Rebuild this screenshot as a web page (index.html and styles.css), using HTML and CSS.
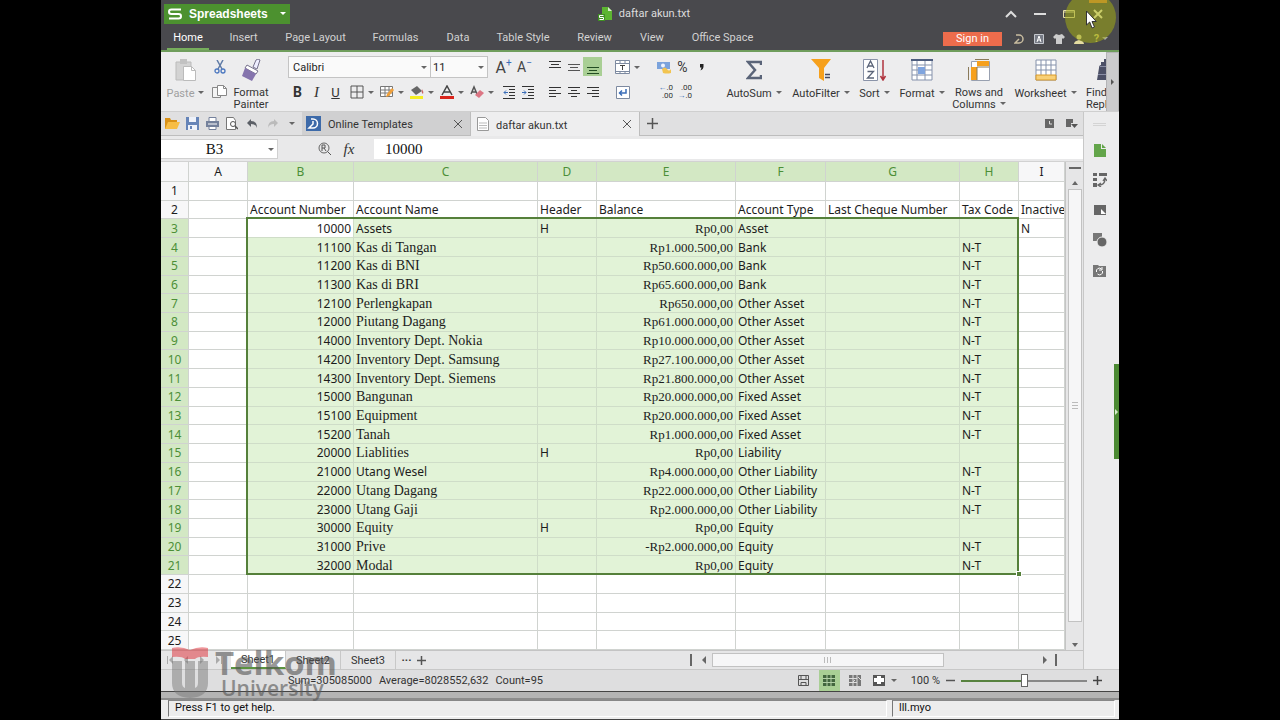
FILE: index.html
```
<!DOCTYPE html>
<html lang="en">

<head>
    <meta charset="UTF-8">
    <meta name="viewport" content="width=device-width, initial-scale=1.0">
    <title>daftar akun.txt - Spreadsheets</title>
    <link rel="stylesheet" href="styles.css">
</head>

<body>
    <div class="app">
        <header class="top">
            <div class="title_bar">
                <button class="brand">
                    <svg width="14" height="12" viewBox="0 0 14 12"><path d="M13 1.5H3.5Q1 1.5 1 3.7T3.5 6h7Q13 6 13 8.2t-2.5 2.3H1" fill="none" stroke="#fff" stroke-width="2" /></svg>
                    <span>Spreadsheets</span>
                    <i class="caret"></i>
                </button>
                <div class="doc_title">
                    <svg width="14" height="14" viewBox="0 0 14 14"><path d="M4 0h6l4 4v9H4z" fill="#5cb531" /><path d="M10 0v4h4z" fill="#d6f0c8" /><path d="M0 7h7v7H0z" fill="#3f8f22" /><path d="M5.500 8.500h-4v2h4v2h-4" fill="none" stroke="#fff" /></svg>
                    <span>daftar akun.txt</span>
                </div>
                <div class="window_buttons">
                    <button aria-label="Collapse"><svg width="12" height="8" viewBox="0 0 12 8"><path d="M1 7l5-5 5 5" fill="none" stroke="#ddd" stroke-width="2" /></svg></button>
                    <button aria-label="Minimize"><svg width="12" height="8" viewBox="0 0 12 8"><path d="M0 4h12" stroke="#ddd" stroke-width="2" /></svg></button>
                    <button aria-label="Maximize"><svg width="12" height="8" viewBox="0 0 12 8"><path d="M.5.5h11v7H.5zM1 2h10" fill="none" stroke="#e8e0a8" /></svg></button>
                    <button aria-label="Close" class="close"><svg width="10" height="10" viewBox="0 0 10 10"><path d="M1 1l8 8M9 1L1 9" stroke="#fffbd0" stroke-width="2" /></svg></button>
                </div>
            </div>
            <div class="menu_bar">
                <nav class="menu">
                    <a href="#" class="active">Home</a>
                    <a href="#">Insert</a>
                    <a href="#">Page Layout</a>
                    <a href="#">Formulas</a>
                    <a href="#">Data</a>
                    <a href="#">Table Style</a>
                    <a href="#">Review</a>
                    <a href="#">View</a>
                    <a href="#">Office Space</a>
                </nav>
                <button class="sign_in">Sign in</button>
                <div class="menu_icons">
                    <button aria-label="Docer"><svg width="10" height="10" viewBox="0 0 10 10"><path d="M2 1h3a4 4 0 010 8H1l4-4" fill="none" stroke="#c9bda0" stroke-width="1.500" /></svg></button>
                    <button aria-label="Language"><svg width="10" height="10" viewBox="0 0 10 10"><path d="M.5.5h9v9h-9z" fill="#777b85" stroke="#c5c8ce" /><path d="M3 8l2-6 2 6M4 6h3" fill="none" stroke="#fff" /></svg></button>
                    <button aria-label="Skin"><svg width="12" height="10" viewBox="0 0 12 10"><path d="M3 0l3 1 3-1 3 3-2 2-1-1v6H3V4L2 5 0 3z" fill="#ccc" /></svg></button>
                    <button aria-label="Account"><svg width="10" height="10" viewBox="0 0 10 10"><circle cx="5" cy="3" r="2.500" fill="#e4dca0" /><path d="M0 10q0-3 5-4 5 1 5 4z" fill="#e4dca0" /></svg></button>
                    <button aria-label="Help" class="help">?<i class="caret"></i></button>
                </div>
            </div>
            <span class="close_glow"></span>
            <span class="click_halo"></span>
            <svg class="pointer" width="11" height="19" viewBox="0 0 11 19"><path d="M.5 1v14l3.200-3 2.300 6 2.500-1-2.500-5.500h4.300z" fill="#fff" stroke="#333" /></svg>
        </header>

        <div class="ribbon">
            <button class="big paste">
                <svg width="22" height="22" viewBox="0 0 22 22"><path d="M1 3h15v18H1z" fill="#d3d3d3" stroke="#bbb" /><path d="M5 0h7v5H5z" fill="#c2c2c2" /><path d="M8.500 7.500h8l4 4v10h-12z" fill="#fff" stroke="#bbb" /><path d="M16.500 7.500v4h4" fill="none" stroke="#bbb" /></svg>
                <span class="label">Paste<i class="caret"></i></span>
            </button>
            <div class="tool_block">
                <div class="tools"><button class="tool" aria-label="Cut"><svg width="12" height="14" viewBox="0 0 12 14"><path d="M3 0l5 9M9 0L4 9" stroke="#5f7ba6" stroke-width="1.500" /><circle cx="3" cy="11" r="2" fill="none" stroke="#4c78c0" stroke-width="1.300" /><circle cx="9" cy="11" r="2" fill="none" stroke="#4c78c0" stroke-width="1.300" /></svg></button></div>
                <div class="tools"><button class="tool" aria-label="Copy"><svg width="15" height="14" viewBox="0 0 15 14"><path d="M.5 2.500h8v10h-8z" fill="#f4f4f4" stroke="#888" /><path d="M5.500.5h6l3 3v7h-9z" fill="#fff" stroke="#888" /><path d="M11.500.5v3h3" fill="none" stroke="#888" /></svg></button></div>
            </div>
            <button class="big painter">
                <svg width="20" height="22" viewBox="0 0 20 22"><path d="M12 8l3-7q2-2 4 0l-3 9z" fill="#eef" stroke="#76718c" /><path d="M6 6l11 6-2 3L4 9z" fill="#fff" stroke="#76718c" /><path d="M4 9l11 6-4 7L1 17z" fill="#8574ad" /></svg>
                <span class="label">Format<br>Painter</span>
            </button>

            <div class="tool_block fonts">
                <div class="tools">
                    <span class="pick font_pick"><select aria-label="Font"><option>Calibri</option></select><i class="caret"></i></span>
                    <span class="pick size_pick"><select aria-label="Font size"><option>11</option></select><i class="caret"></i></span>
                    <button class="tool grow" aria-label="Increase font size">A<sup>+</sup></button>
                    <button class="tool shrink" aria-label="Decrease font size">A<sup>−</sup></button>
                </div>
                <div class="tools">
                    <button class="tool bold">B</button>
                    <button class="tool italic">I</button>
                    <button class="tool underline">U</button>
                    <button class="tool drop first_drop" aria-label="Borders"><svg width="14" height="14" viewBox="0 0 14 14"><path d="M1 1h12v12H1zM7 1v12M1 7h12" fill="none" stroke="#555" /></svg><i class="caret"></i></button>
                    <button class="tool drop" aria-label="Cell style"><svg width="14" height="14" viewBox="0 0 14 14"><path d="M.5 1.500h12v10H.5zM1 5h12M1 8h12M5 1v10M9 1v10" fill="#fff" stroke="#777" /><path d="M6 12l1-3 5-6 2 2-5 6z" fill="#f0a03a" /></svg><i class="caret"></i></button>
                    <button class="tool drop" aria-label="Fill color"><svg width="14" height="14" viewBox="0 0 14 14"><path d="M1 5l6-4 5 5-6 4z" fill="#666" /><path d="M12 4q2 3 1 5-2-1-1-5" fill="#c66" /><path d="M0 11h13v3H0z" fill="#f4ee22" /></svg><i class="caret"></i></button>
                    <button class="tool drop" aria-label="Font color"><svg width="14" height="14" viewBox="0 0 14 14"><path d="M2 10L7 1l5 9M4 7h6" fill="none" stroke="#444" stroke-width="1.500" /><path d="M0 11h14v3H0z" fill="#d9251c" /></svg><i class="caret"></i></button>
                    <button class="tool drop" aria-label="Clear format"><svg width="14" height="14" viewBox="0 0 14 14"><path d="M1 9l3-7 3 7M2 7h4" fill="none" stroke="#555" stroke-width="1.500" /><path d="M5 10l5-5 4 3-5 5z" fill="#dc7684" /></svg><i class="caret"></i></button>
                    <button class="tool" aria-label="Decrease indent"><svg width="13" height="13" viewBox="0 0 13 13"><path d="M0 .5h12M6 3.500h6M6 6.500h6M6 9.500h6M0 12.500h12" stroke="#333" /><path d="M5 6.500H1M3 4.500l-2 2 2 2" fill="none" stroke="#3a6db8" /></svg></button>
                    <button class="tool" aria-label="Increase indent"><svg width="13" height="13" viewBox="0 0 13 13"><path d="M0 .5h12M6 3.500h6M6 6.500h6M6 9.500h6M0 12.500h12" stroke="#333" /><path d="M0 6.500h4M2 4.500l2 2-2 2" fill="none" stroke="#3a6db8" /></svg></button>
                </div>
            </div>
            <div class="tool_block align">
                <div class="tools">
                    <button class="tool" aria-label="Top align"><svg width="12" height="14" viewBox="0 0 12 14"><path d="M0 1.500h12M2 4.500h8M0 7.500h12" stroke="#333" /></svg></button>
                    <button class="tool" aria-label="Middle align"><svg width="12" height="14" viewBox="0 0 12 14"><path d="M0 4.500h12M2 7.500h8M0 10.500h12" stroke="#555" /></svg></button>
                    <button class="tool on" aria-label="Bottom align"><svg width="12" height="14" viewBox="0 0 12 14"><path d="M0 7.500h12M2 10.500h8M0 13.500h12" stroke="#234d23" /></svg></button>
                </div>
                <div class="tools">
                    <button class="tool" aria-label="Align left"><svg width="12" height="12" viewBox="0 0 12 12"><path d="M0 1.500h12M0 4.500h7M0 7.500h12M0 10.500h7" stroke="#333" /></svg></button>
                    <button class="tool" aria-label="Align center"><svg width="12" height="12" viewBox="0 0 12 12"><path d="M0 1.500h12M3 4.500h6M0 7.500h12M3 10.500h6" stroke="#333" /></svg></button>
                    <button class="tool" aria-label="Align right"><svg width="12" height="12" viewBox="0 0 12 12"><path d="M0 1.500h12M5 4.500h7M0 7.500h12M5 10.500h7" stroke="#333" /></svg></button>
                </div>
            </div>
            <div class="tool_block merge">
                <div class="tools"><button class="tool drop" aria-label="Merge cells"><svg width="15" height="14" viewBox="0 0 15 14"><path d="M.5.5h14v13H.5zM0 3.500h15M0 11.500h15M5 0v3M10 0v3M5 11v3M10 11v3" fill="#fff" stroke="#7d8aa0" /><path d="M5 5.500h5M7.500 5v5" stroke="#444" /></svg><i class="caret"></i></button></div>
                <div class="tools"><button class="tool" aria-label="Wrap text"><svg width="14" height="13" viewBox="0 0 14 13"><path d="M.5.5h13v12H.5z" fill="#fff" stroke="#7d8aa0" /><path d="M10 3v4H4M6 4.500L3.500 7 6 9.500" fill="none" stroke="#3a6db8" stroke-width="1.500" /></svg></button></div>
            </div>
            <div class="tool_block number">
                <div class="tools">
                    <button class="tool" aria-label="Currency"><svg width="14" height="13" viewBox="0 0 14 13"><path d="M0 1h13v7H0z" fill="#7ba3dc" /><circle cx="6" cy="4.500" r="2" fill="#eef4ff" /><path d="M5 8q3-3 5 0t4 0v4q-4 1-8 0z" fill="#f2c450" /></svg></button>
                    <button class="tool percent">%</button>
                    <button class="tool" aria-label="Comma style"><svg width="5" height="8" viewBox="0 0 5 8"><path d="M1 1h3.500v3Q4.500 6 1.500 7.500L2.500 4.500H1z" fill="#222" /></svg></button>
                </div>
                <div class="tools">
                    <button class="tool decimals"><b>←</b>.0<br>.00</button>
                    <button class="tool decimals">.00<br><b>→</b>.0</button>
                </div>
            </div>

            <button class="big autosum">
                <svg width="16" height="20" viewBox="0 0 16 20"><path d="M15 5V2H2l7 8-7 8h13v-3" fill="none" stroke="#5a6478" stroke-width="2.500" /></svg>
                <span class="label">AutoSum<i class="caret"></i></span>
            </button>
            <button class="big autofilter">
                <svg width="22" height="22" viewBox="0 0 22 22"><path d="M1 0h20l-7 9v13l-5-3V9z" fill="#f6a01c" /><path d="M15 15.500h5M15 18.500h5" stroke="#444a60" stroke-width="1.500" /></svg>
                <span class="label">AutoFilter<i class="caret"></i></span>
            </button>
            <button class="big sort">
                <svg width="24" height="22" viewBox="0 0 24 22"><path d="M.5.5h14v21H.5z" fill="#fff" stroke="#8a93a8" /><path d="M4 9l3.500-7L11 9M5 7h5M4.500 12.500h6l-6 6.500h6.500" fill="none" stroke="#5b6478" stroke-width="1.300" /><path d="M20 1v20M17.500 17l2.500 4 2.500-4" fill="none" stroke="#b0353f" stroke-width="1.500" /></svg>
                <span class="label">Sort<i class="caret"></i></span>
            </button>
            <button class="big format">
                <svg width="22" height="22" viewBox="0 0 22 22"><path d="M1 1h20v20H1zM1 6h20M1 11h20M1 16h20M6 1v20M14 1v20" fill="#fff" stroke="#8592ab" /><path d="M0 0h22v2H0z" fill="#4d5d7e" /><path d="M7 8h7v7H7z" fill="#7fa4de" /></svg>
                <span class="label">Format<i class="caret"></i></span>
            </button>
            <button class="big rows_cols">
                <svg width="22" height="22" viewBox="0 0 22 22"><path d="M3.500 2.500h18v19h-18z" fill="#fff" stroke="#98a0b0" /><path d="M9 2h12v5H9zM3 8h6v13H3z" fill="#f6a01c" /><path d="M.5 8v13M7 .5h14M9 8h12M9 8v13" stroke="#8a7a5a" /></svg>
                <span class="label">Rows and<br>Columns<i class="caret"></i></span>
            </button>
            <button class="big worksheet">
                <svg width="22" height="22" viewBox="0 0 22 22"><path d="M1 1h20v20H1zM1 6h20M1 11h20M6 1v15M11 1v15M16 1v15" fill="#fff" stroke="#8592ab" /><path d="M1 16h20v5H1z" fill="#f8d077" stroke="#d99a2a" /></svg>
                <span class="label">Worksheet<i class="caret"></i></span>
            </button>
            <button class="big find">
                <svg width="22" height="22" viewBox="0 0 22 22"><path d="M3 9q0-3 2-3V3h3V0h3v3h3v3q2 0 2 3v12H1z" fill="#4b4f66" /><path d="M2 15.500h14M4 7.500h11" stroke="#8a8ea6" /></svg>
                <span class="label">Find and<br>Replace</span>
            </button>
            <button class="ribbon_more" aria-label="More tools"></button>
        </div>

        <div class="workspace">
            <main class="main">
                <div class="doc_tabs">
                    <div class="quick">
                        <button aria-label="Open"><svg width="15" height="13" viewBox="0 0 15 13"><path d="M0 1h5l1 2h6v9H0z" fill="#d99117" /><path d="M3 5h12l-3 7H0z" fill="#f7bd45" /></svg></button>
                        <button aria-label="Save"><svg width="13" height="13" viewBox="0 0 13 13"><path d="M0 0h13v13H0z" fill="#6584b8" /><path d="M3 0h7v5H3zM2 8h9v5H2z" fill="#eef2fa" /><path d="M4 9h2v3H4z" fill="#6584b8" /></svg></button>
                        <button aria-label="Print"><svg width="13" height="13" viewBox="0 0 13 13"><path d="M3 .5h7v4H3zM3 8.500h7v4H3z" fill="#fff" stroke="#74819c" /><path d="M0 4h13v6H0z" fill="#74819c" /><path d="M2 7h9" stroke="#fff" /></svg></button>
                        <button aria-label="Preview"><svg width="12" height="13" viewBox="0 0 12 13"><path d="M.5.5h7l2 3v9h-9z" fill="#fff" stroke="#777" /><circle cx="7" cy="7" r="2.500" fill="#fff" stroke="#555" /><path d="M9 9l3 3" stroke="#555" stroke-width="1.500" /></svg></button>
                        <button aria-label="Undo"><svg width="11" height="9" viewBox="0 0 11 9"><path d="M4 0v2q6 0 6 7Q9 5 4 5v3L0 4z" fill="#5b5f66" /></svg></button>
                        <button aria-label="Redo"><svg width="11" height="9" viewBox="0 0 11 9"><path d="M7 0v2Q1 2 1 9q1-4 6-4v3l4-4z" fill="#bbb" /></svg></button>
                        <button aria-label="Customize"><i class="caret"></i></button>
                    </div>
                    <div class="doc_tab">
                        <svg width="15" height="15" viewBox="0 0 15 15"><path d="M0 0h15v15H0z" fill="#3d6aa9" /><path d="M5 3h2a4.500 4.500 0 010 9H3l4-4V5" fill="none" stroke="#fff" stroke-width="1.500" /></svg>
                        <span>Online Templates</span>
                        <button class="x" aria-label="Close tab"><svg width="8" height="8" viewBox="0 0 8 8"><path d="M0 0l8 8M8 0L0 8" stroke="#555" /></svg></button>
                    </div>
                    <div class="doc_tab current">
                        <svg width="12" height="14" viewBox="0 0 12 14"><path d="M.5.5h8l3 3v10H.5z" fill="#fff" stroke="#999" /><path d="M2 6h8M2 8.500h8M2 11h8" stroke="#bbb" /></svg>
                        <span>daftar akun.txt</span>
                        <button class="x" aria-label="Close tab"><svg width="8" height="8" viewBox="0 0 8 8"><path d="M0 0l8 8M8 0L0 8" stroke="#555" /></svg></button>
                    </div>
                    <button class="new_tab" aria-label="New tab"><svg width="11" height="11" viewBox="0 0 11 11"><path d="M0 5.500h11M5.500 0v11" stroke="#555" stroke-width="1.500" /></svg></button>
                    <div class="tab_tools">
                        <button aria-label="History"><svg width="9" height="9" viewBox="0 0 9 9"><path d="M0 0h9v9H0z" fill="#666" /><path d="M4.500 2v3H7" fill="none" stroke="#ddd" /></svg></button>
                        <button aria-label="Tab list"><svg width="12" height="10" viewBox="0 0 12 10"><path d="M0 0h7v4H5v4H0z" fill="#666" /><path d="M5 5h7L8.500 9z" fill="#555" /></svg></button>
                    </div>
                </div>
                <div class="formula_bar">
                    <div class="name_box"><input type="text" aria-label="Cell name" value="B3"><i class="caret"></i></div>
                    <button aria-label="Look up"><svg width="14" height="14" viewBox="0 0 14 14"><circle cx="6" cy="6" r="5" fill="none" stroke="#666" /><path d="M4 9V3h3v3H4M6 6l2 3M9.500 9.500L13 13" fill="none" stroke="#555" /></svg></button>
                    <button class="fx">fx</button>
                    <input class="formula" type="text" aria-label="Formula" value="10000">
                </div>
                <div class="sheet_area">
                    <table class="sheet">
                        <thead>
                            <tr id="columnHeads"></tr>
                        </thead>
                        <tbody id="sheetBody"></tbody>
                    </table>
                    <div class="scroll_y">
                        <i class="split"></i>
                        <i class="up"></i>
                        <div class="thumb_y"><span></span></div>
                        <i class="down"></i>
                    </div>
                </div>
                <div class="sheet_bar">
                    <div class="sheet_nav">
                        <button aria-label="First sheet"><svg width="7" height="8" viewBox="0 0 7 8"><path d="M.5 0v8" stroke="#aaa" /><path d="M6 0v8L2 4z" fill="#aaa" /></svg></button>
                        <button aria-label="Previous sheet"><svg width="7" height="8" viewBox="0 0 7 8"><path d="M5 0v8L1 4z" fill="#aaa" /></svg></button>
                        <button aria-label="Next sheet"><svg width="7" height="8" viewBox="0 0 7 8"><path d="M1 0v8l4-4z" fill="#aaa" /></svg></button>
                        <button aria-label="Last sheet"><svg width="7" height="8" viewBox="0 0 7 8"><path d="M6.500 0v8" stroke="#aaa" /><path d="M1 0v8l4-4z" fill="#aaa" /></svg></button>
                    </div>
                    <button class="sheet_tab current">Sheet1</button>
                    <button class="sheet_tab">Sheet2</button>
                    <button class="sheet_tab">Sheet3</button>
                    <button class="dots" aria-label="More sheets">···</button>
                    <button aria-label="Add sheet"><svg width="9" height="9" viewBox="0 0 9 9"><path d="M0 4.500h9M4.500 0v9" stroke="#555" stroke-width="1.500" /></svg></button>
                    <div class="scroll_x">
                        <i class="bar"></i>
                        <i class="left"></i>
                        <div class="track_x"><div class="thumb_x"><span></span></div></div>
                        <i class="right"></i>
                        <i class="bar"></i>
                    </div>
                </div>
            </main>
            <aside class="side">
                <i class="grip"></i>
                <button aria-label="New document"><svg width="12" height="13" viewBox="0 0 12 13"><path d="M0 0h7v5h5v8H0zM8 0l4 4H8z" fill="#63a54a" /></svg></button>
                <button aria-label="Layout"><svg width="14" height="14" viewBox="0 0 14 14"><path d="M0 0h4v3H0zM6 0h8v3H6zM0 5h4v3H0zM0 10h4v4H0z" fill="#666" /><path d="M6 12q6 0 6-6M10 8l2-3 2 3M8 10l-3 2 3 2" fill="none" stroke="#666" stroke-width="1.300" /></svg></button>
                <button aria-label="Selection"><svg width="12" height="12" viewBox="0 0 12 12"><path d="M0 1h12v10H0z" fill="#666" /><path d="M7 5l5 5H7z" fill="#fff" /></svg></button>
                <button aria-label="Shapes"><svg width="14" height="14" viewBox="0 0 14 14"><path d="M0 0h9v8H0z" fill="#777" /><circle cx="9" cy="9" r="5" fill="#666" stroke="#ececec" /></svg></button>
                <button aria-label="Backup"><svg width="13" height="13" viewBox="0 0 13 13"><path d="M0 1h5l1 1h7v11H0z" fill="#777" /><path d="M3.500 8a3 3 0 015-3M9.500 7a3 3 0 01-5 3M9 3v3H6" fill="none" stroke="#fff" /></svg></button>
                <button class="side_handle" aria-label="Show panel"></button>
            </aside>
        </div>

        <footer class="status">
            <div class="sums"><span>Sum=305085000</span><span>Average=8028552,632</span><span>Count=95</span></div>
            <div class="views">
                <button aria-label="Save state"><svg width="11" height="11" viewBox="0 0 11 11"><path d="M.5.5h10v10H.5zM0 4.500h11M3 1v3M8 1v3M3 7.500h5v3H3z" fill="none" stroke="#555" /></svg></button>
                <button class="on" aria-label="Normal view"><svg width="12" height="11" viewBox="0 0 12 11"><path d="M0 0h12v11H0z" fill="#42663e" /><path d="M0 3.500h12M0 7.500h12M4 0v11M8 0v11" stroke="#b4d1a8" /></svg></button>
                <button aria-label="Page break view"><svg width="12" height="11" viewBox="0 0 12 11"><path d="M0 0h12v11H0z" fill="#777" /><path d="M0 3.500h8M0 7.500h8M4 0v11M8 0v11M9 2l3 3M3 8l3-3" stroke="#ddd" /></svg></button>
                <button class="wide" aria-label="Reading view"><svg width="12" height="11" viewBox="0 0 12 11"><path d="M0 0h12v11H0z" fill="#555" /><path d="M1 3h10v4H1zM4 1h4v8H4z" fill="#fff" /></svg><i class="caret"></i></button>
            </div>
            <div class="zoom">
                <span>100 %</span>
                <button aria-label="Zoom out"><svg width="9" height="9" viewBox="0 0 9 9"><path d="M0 4.500h9" stroke="#555" stroke-width="1.500" /></svg></button>
                <input type="range" aria-label="Zoom" min="0" max="200" value="100">
                <button aria-label="Zoom in"><svg width="9" height="9" viewBox="0 0 9 9"><path d="M0 4.500h9M4.500 0v9" stroke="#444" stroke-width="1.500" /></svg></button>
            </div>
        </footer>

        <div class="help_bar">
            <p>Press F1 to get help.</p>
            <p>lll.myo</p>
        </div>

        <div class="watermark">
            <svg width="38" height="52" viewBox="0 0 38 52"><path d="M1 2q9-2 18 2 9-4 18-2v9q-10-1-13 2H14Q11 10 1 11z" fill="#e0252f" /><path d="M1 15h10v22q0 4 3 5V15h10v27q3-1 3-5V15h10v22q0 14-18 15Q1 51 1 37z" fill="#777" /></svg>
            <div class="words"><b>Telkom</b><span>University</span></div>
        </div>
    </div>

    <script>
        let columns = ['A', 'B', 'C', 'D', 'E', 'F', 'G', 'H', 'I'];
        let total_rows = 25;
        let first_row = 3;
        let last_row = 21;

        // values for columns B to I, keyed by row order starting at row 2
        let records = [
            ['Account Number', 'Account Name', 'Header', 'Balance', 'Account Type', 'Last Cheque Number', 'Tax Code', 'Inactive'],
            ['10000', 'Assets', 'H', 'Rp0,00', 'Asset', '', '', 'N'],
            ['11100', 'Kas di Tangan', '', 'Rp1.000.500,00', 'Bank', '', 'N-T', ''],
            ['11200', 'Kas di BNI', '', 'Rp50.600.000,00', 'Bank', '', 'N-T', ''],
            ['11300', 'Kas di BRI', '', 'Rp65.600.000,00', 'Bank', '', 'N-T', ''],
            ['12100', 'Perlengkapan', '', 'Rp650.000,00', 'Other Asset', '', 'N-T', ''],
            ['12000', 'Piutang Dagang', '', 'Rp61.000.000,00', 'Other Asset', '', 'N-T', ''],
            ['14000', 'Inventory Dept. Nokia', '', 'Rp10.000.000,00', 'Other Asset', '', 'N-T', ''],
            ['14200', 'Inventory Dept. Samsung', '', 'Rp27.100.000,00', 'Other Asset', '', 'N-T', ''],
            ['14300', 'Inventory Dept. Siemens', '', 'Rp21.800.000,00', 'Other Asset', '', 'N-T', ''],
            ['15000', 'Bangunan', '', 'Rp20.000.000,00', 'Fixed Asset', '', 'N-T', ''],
            ['15100', 'Equipment', '', 'Rp20.000.000,00', 'Fixed Asset', '', 'N-T', ''],
            ['15200', 'Tanah', '', 'Rp1.000.000,00', 'Fixed Asset', '', 'N-T', ''],
            ['20000', 'Liablities', 'H', 'Rp0,00', 'Liability', '', '', ''],
            ['21000', 'Utang Wesel', '', 'Rp4.000.000,00', 'Other Liability', '', 'N-T', ''],
            ['22000', 'Utang Dagang', '', 'Rp22.000.000,00', 'Other Liability', '', 'N-T', ''],
            ['23000', 'Utang Gaji', '', 'Rp2.000.000,00', 'Other Liability', '', 'N-T', ''],
            ['30000', 'Equity', 'H', 'Rp0,00', 'Equity', '', '', ''],
            ['31000', 'Prive', '', '-Rp2.000.000,00', 'Equity', '', 'N-T', ''],
            ['32000', 'Modal', '', 'Rp0,00', 'Equity', '', 'N-T', '']
        ];
        // account names still in the default sheet font
        let plain_names = [2, 3, 16];

        function draw_heads() {
            let html = '<th class="corner"></th>';
            columns.forEach(function (name, c) {
                let picked = c >= 1 && c <= 7 ? ' picked' : '';
                html += '<th class="col_' + name + picked + '">' + name + '</th>';
            });
            document.getElementById("columnHeads").innerHTML = html;
        }

        function draw_rows() {
            let html = '';
            for (let r = 1; r <= total_rows; r++) {
                let in_rows = r >= first_row && r <= last_row;
                let record = records[r - 2] || [];
                html += '<tr><th class="' + (in_rows ? 'picked' : '') + '">' + r + '</th>';
                columns.forEach(function (name, c) {
                    let in_cols = c >= 1 && c <= 7;
                    let names = [];
                    if (in_rows && in_cols) names.push('selected');
                    if (r == first_row && c == 1) names.push('current_cell');
                    if (in_rows && (c == 0 || c == 7)) names.push('edge_side');
                    if (in_cols && (r == first_row - 1 || r == last_row)) names.push('edge_bottom');
                    if (r > 2 && (name == 'B' || name == 'E')) names.push('number_cell');
                    if (r > 2 && name == 'E') names.push('money');
                    if (r > 2 && name == 'C' && !plain_names.includes(r)) names.push('serif');
                    let value = c == 0 ? '' : (record[c - 1] || '');
                    if (r == last_row && c == 7) value += '<i class="fill_handle"></i>';
                    html += '<td class="' + names.join(' ') + '">' + value + '</td>';
                });
                html += '</tr>';
            }
            document.getElementById("sheetBody").innerHTML = html;
        }

        draw_heads();
        draw_rows();
    </script>
</body>

</html>
```

FILE: styles.css
```
* {
    box-sizing: border-box;
}

body {
    margin: 0;
    padding: 0 161px;
    background: #000;
    font-family: Roboto, "Noto Sans", sans-serif;
    font-size: 11px;
    color: #333;
}

button,
input,
select {
    margin: 0;
    padding: 0;
    border: none;
    background: none;
    font: inherit;
    color: inherit;
}

button {
    display: flex;
    align-items: center;
    justify-content: center;
    cursor: pointer;
}

svg {
    display: block;
    flex: none;
}

.caret {
    flex: none;
    border: 3px solid transparent;
    border-top-color: #666;
    border-bottom: none;
}

.app {
    position: relative;
    display: flex;
    flex-direction: column;
    min-height: 100vh;
    overflow: hidden;
    background: #e9e9ea;
}

/* title and menu */
.top {
    position: relative;
    background: #49494d;
    color: #ddd;
    border-bottom: 2px solid #6f9d5c;
}

.title_bar {
    display: grid;
    grid-template-columns: 1fr auto 1fr;
    align-items: center;
    height: 27px;
    padding: 0 7px 0 3px;
}

.brand {
    justify-self: start;
    gap: 7px;
    height: 20px;
    padding: 0 4px;
    background: #4c912f;
    font-family: "Liberation Sans", sans-serif;
    font-size: 12px;
    font-weight: bold;
    color: #fff;
}

.brand .caret {
    margin-left: 5px;
    border-top-color: #fff;
}

.doc_title {
    display: flex;
    align-items: center;
    gap: 7px;
    margin-left: 12px;
}

.window_buttons {
    justify-self: end;
    display: flex;
}

.window_buttons button {
    width: 29px;
    height: 24px;
}

.menu_bar {
    display: flex;
    align-items: center;
    height: 23px;
}

.menu {
    display: grid;
    grid-template-columns: 54px 57px 87px 73px 52px 78px 65px 50px 91px;
    flex: 1;
    height: 23px;
}

.menu a {
    justify-self: center;
    padding: 0 6px;
    line-height: 22px;
    color: #d2d2d2;
    text-decoration: none;
}

.menu .active {
    line-height: 21px;
    border-bottom: 2px solid #76ad5c;
    color: #fff;
}

.sign_in {
    width: 59px;
    height: 14px;
    background: #ed6c4c;
    color: #fff;
}

.menu_icons {
    display: flex;
    padding: 0 6px 0 7px;
}

.menu_icons button {
    width: 20px;
    height: 18px;
}

.menu_icons .help {
    width: 24px;
    gap: 3px;
    color: #d8cf72;
    font-weight: bold;
}

.help .caret {
    border-top-color: #aaa;
}

.close_glow {
    position: absolute;
    top: 0;
    right: 12px;
    width: 18px;
    height: 3px;
    background: #e0823a;
}

.click_halo {
    position: absolute;
    top: -8px;
    right: 3px;
    width: 51px;
    height: 51px;
    border-radius: 50%;
    background: rgba(160, 170, 20, 0.55);
}

.pointer {
    position: absolute;
    top: 10px;
    right: 22px;
}

/* ribbon */
.ribbon {
    position: relative;
    display: flex;
    align-items: flex-start;
    height: 60px;
    padding: 4px 0 0;
    overflow: hidden;
    background: #ededee;
    border-bottom: 1px solid #cfcfcf;
}

.big {
    flex: none;
    flex-direction: column;
    justify-content: flex-start;
    padding-top: 3px;
}

.big svg {
    height: 22px;
}

.label {
    margin-top: 7px;
    line-height: 12px;
    white-space: nowrap;
}

.label .caret {
    display: inline-block;
    margin-left: 4px;
    vertical-align: 3px;
}

.paste {
    width: 49px;
    color: #a0a0a0;
}

.painter {
    width: 44px;
    margin-right: 15px;
}

.painter .label,
.rows_cols .label,
.find .label {
    margin-top: 6px;
}

.tool_block {
    display: flex;
    flex-direction: column;
    flex: none;
    gap: 3px;
}

.tools {
    display: flex;
    height: 22px;
}

.tool {
    width: 19px;
    height: 22px;
    white-space: nowrap;
}

.drop {
    justify-content: flex-start;
    gap: 4px;
    width: 30px;
    padding-left: 2px;
}

.first_drop {
    margin-left: 3px;
}

.drop + .tool:not(.drop) {
    margin-left: 2px;
}

.tool.on {
    height: 19px;
    margin-top: 1px;
    background: #a9cf95;
}

.fonts {
    width: 250px;
}

.align {
    margin-left: 7px;
}

.merge {
    margin-left: 11px;
}

.number {
    width: 69px;
    margin-left: 11px;
}

.pick {
    display: flex;
    align-items: center;
    background: #fafafa;
    border: 1px solid #c4c4c4;
}

.pick select {
    flex: 1;
    min-width: 0;
    padding-left: 4px;
    appearance: none;
    outline: none;
    color: #222;
}

.pick .caret {
    margin-right: 3px;
}

.font_pick {
    width: 143px;
}

.size_pick {
    width: 57px;
    border-left: none;
}

.size_pick select {
    padding-left: 2px;
}

.grow,
.shrink {
    width: 21px;
    font-size: 16px;
    color: #444;
}

.grow {
    margin-left: 5px;
}

.shrink {
    font-size: 14px;
}

.tool sup {
    align-self: flex-start;
    font-size: 10px;
    line-height: 14px;
    color: #3a6db8;
}

.bold {
    font-size: 14px;
    font-weight: bold;
}

.italic {
    font-family: "Liberation Serif", serif;
    font-size: 15px;
    font-style: italic;
}

.underline {
    font-size: 13px;
    text-decoration: underline;
}

.percent {
    font-size: 14px;
}

.decimals {
    display: block;
    font-size: 8px;
    line-height: 8px;
    text-align: right;
}

.decimals b {
    color: #3a6db8;
}

.autosum {
    width: 62px;
}

.autofilter {
    width: 72px;
}

.sort {
    width: 35px;
}

.format {
    width: 60px;
}

.rows_cols {
    width: 54px;
}

.worksheet {
    width: 79px;
}

.find {
    width: 44px;
}

.find .label {
    text-align: left;
}

.ribbon_more {
    position: absolute;
    top: 0;
    right: 0;
    width: 13px;
    height: 60px;
    background: #cbcbcd;
    border: 1px solid #b4b4b6;
}

.ribbon_more::after {
    content: "";
    border: 3px solid transparent;
    border-left-color: #555;
    border-right: none;
}

/* document tabs */
.workspace {
    display: grid;
    grid-template-columns: 1fr 35px;
    flex: 1;
}

.main {
    display: flex;
    flex-direction: column;
    min-width: 0;
    border-right: 1px solid #c8c8c8;
}

.doc_tabs {
    display: flex;
    height: 24px;
    background: #e0e0e1;
    border-bottom: 1px solid #bdbdbd;
}

.quick {
    display: flex;
    width: 141px;
    padding-left: 1px;
}

.quick button {
    width: 20px;
    height: 23px;
}

.doc_tab {
    display: flex;
    align-items: center;
    gap: 7px;
    width: 169px;
    padding: 0 8px 0 4px;
    background: #d0d0d1;
    border-right: 1px solid #bdbdbd;
}

.doc_tab.current {
    height: 24px;
    background: #eeeeef;
}

.doc_tab span {
    padding-top: 2px;
}

.doc_tab.current svg:first-child {
    margin-left: 2px;
}

.doc_tab .x {
    margin-left: auto;
}

.new_tab {
    width: 25px;
}

.tab_tools {
    display: flex;
    gap: 12px;
    margin-left: auto;
    padding-right: 5px;
}

/* formula bar */
.formula_bar {
    display: flex;
    height: 26px;
    padding: 3px 0 2px;
    background: #e9e9ea;
    border-bottom: 1px solid #d2d2d2;
}

.formula_bar input {
    font-family: "Liberation Serif", serif;
    font-size: 15px;
    color: #111;
}

.name_box {
    display: flex;
    align-items: center;
    width: 117px;
    margin-right: 35px;
    padding-right: 3px;
    background: #fff;
    border: 1px solid #d0d0d0;
    border-left: none;
}

.name_box input {
    flex: 1;
    min-width: 0;
    text-align: center;
}

.formula_bar button {
    width: 24px;
}

.formula_bar .fx {
    margin-right: 13px;
    font-family: "Liberation Serif", serif;
    font-size: 15px;
    font-style: italic;
}

.formula_bar .formula {
    flex: 1;
    min-width: 0;
    padding-left: 11px;
    background: #fff;
}

/* grid */
.sheet_area {
    display: flex;
    flex: 1;
}

.sheet {
    flex: 1;
    width: 100%;
    min-width: 0;
    height: 100%;
    table-layout: fixed;
    border-collapse: separate;
    border-spacing: 0;
    background: #fff;
    color: #1c1c1c;
    font-family: "Noto Sans", "Open Sans", sans-serif;
    font-size: 12px;
    line-height: 16px;
}

.sheet th,
.sheet td {
    position: relative;
    padding: 1px 2px 0;
    border-right: 1px solid #d0d3d0;
    border-bottom: 1px solid #d0d3d0;
    white-space: nowrap;
    text-align: left;
}

.sheet th {
    padding: 1px 0 0;
    background: #f7f7f8;
    text-align: center;
    font-weight: normal;
}

.sheet thead th {
    height: 20px;
}

.sheet .picked {
    background: #d3e8c4;
    color: #4c8f37;
}

.corner {
    width: 28px;
}

.col_A,
.col_D,
.col_H {
    width: 59px;
}

.col_B {
    width: 106px;
}

.col_C {
    width: 184px;
}

.col_E {
    width: 139px;
}

.col_F {
    width: 90px;
}

.col_G {
    width: 134px;
}

.sheet td:last-child {
    overflow: hidden;
}

.sheet .selected {
    background: #e2f3d7;
    border-color: #cfddc8;
}

.sheet .current_cell {
    background: #fff;
}

.sheet .number_cell {
    text-align: right;
}

.sheet .serif,
.sheet .money {
    font-family: "Liberation Serif", serif;
    font-size: 14px;
}

.sheet .money {
    font-size: 13px;
}

/* thick frame round the selection */
.edge_bottom::after,
.edge_side::before {
    content: "";
    position: absolute;
    z-index: 1;
    background: #55803a;
}

.edge_bottom::after {
    left: -2px;
    right: -1px;
    bottom: -1px;
    height: 2px;
}

.edge_side::before {
    top: -1px;
    right: -1px;
    bottom: -1px;
    width: 2px;
}

.fill_handle {
    position: absolute;
    right: -4px;
    bottom: -3px;
    z-index: 2;
    width: 6px;
    height: 6px;
    background: #55803a;
    border: 1px solid #fff;
}

.scroll_y {
    display: flex;
    flex: none;
    flex-direction: column;
    align-items: center;
    width: 18px;
    padding: 5px 0 3px;
    background: #e6e6e7;
    border-left: 1px solid #c4c4c4;
}

.split {
    width: 12px;
    height: 2px;
    background: #666;
}

.up {
    margin: 12px 0 4px;
    border: 3px solid transparent;
    border-bottom: 4px solid #666;
    border-top: none;
}

.down {
    margin-top: 21px;
    border: 3px solid transparent;
    border-top: 4px solid #666;
    border-bottom: none;
}

.thumb_y {
    display: flex;
    align-items: center;
    justify-content: center;
    flex: 1;
    width: 14px;
    background: #f6f6f7;
    border: 1px solid #c2c2c2;
}

.thumb_y span {
    width: 6px;
    height: 7px;
    background: repeating-linear-gradient(#bbb 0 1px, transparent 1px 3px);
}

/* sheet tabs */
.sheet_bar {
    display: flex;
    height: 19px;
    background: #e6e6e7;
    border-top: 1px solid #c4c4c4;
}

.sheet_nav {
    display: flex;
    width: 70px;
    padding-left: 1px;
}

.sheet_nav button {
    width: 16px;
}

.sheet_tab {
    width: 55px;
    border-right: 1px solid #c8c8c8;
}

.sheet_tab.current {
    background: #fff;
    border-bottom: 2px solid #5b9340;
}

.dots {
    width: 21px;
    font-weight: bold;
}

.scroll_x {
    display: flex;
    align-items: center;
    width: 43%;
    margin-left: auto;
    padding: 0 26px 0 3px;
}

.bar {
    width: 2px;
    height: 12px;
    background: #666;
}

.left,
.right {
    border: 4px solid transparent;
}

.left {
    margin: 0 6px 0 10px;
    border-right-color: #666;
    border-left: none;
}

.right {
    margin: 0 8px;
    border-left-color: #666;
    border-right: none;
}

.track_x {
    flex: 1;
}

.thumb_x {
    display: flex;
    align-items: center;
    justify-content: center;
    width: 72%;
    height: 14px;
    background: #f6f6f7;
    border: 1px solid #c2c2c2;
}

.thumb_x span {
    width: 8px;
    height: 6px;
    background: repeating-linear-gradient(90deg, #bbb 0 1px, transparent 1px 3px);
}

/* side panel */
.side {
    position: relative;
    display: flex;
    flex-direction: column;
    align-items: center;
    gap: 6px;
    padding-right: 4px;
    background: #ececed;
}

.side button {
    width: 20px;
    height: 24px;
}

.grip {
    width: 13px;
    height: 3px;
    margin: 11px 0 6px;
    border: solid #d4d4d4;
    border-width: 1px 0;
}

.side .side_handle {
    position: absolute;
    top: 252px;
    right: 0;
    width: 5px;
    height: 95px;
    background: #4c8a33;
}

.side_handle::after {
    content: "";
    border: 3px solid transparent;
    border-left-color: #d8edcc;
    border-right: none;
}

/* status bars */
.status {
    display: flex;
    align-items: center;
    height: 23px;
    padding-right: 17px;
    background: #dededf;
    border-top: 1px solid #c8c8c8;
    border-bottom: 1px solid #444;
}

.sums {
    display: flex;
    flex: 1;
    gap: 7px;
    padding-left: 127px;
}

.views {
    display: flex;
    gap: 5px;
}

.views button {
    width: 21px;
    height: 21px;
}

.views .on {
    background: #a9cf95;
}

.views .wide {
    width: 28px;
    gap: 6px;
}

.zoom {
    display: flex;
    align-items: center;
    gap: 6px;
    padding-left: 12px;
}

.zoom input {
    width: 126px;
    height: 14px;
    appearance: none;
    background: linear-gradient(90deg, #57823f 50%, #888 50%) center / 100% 2px no-repeat;
}

.zoom input::-webkit-slider-thumb {
    width: 7px;
    height: 13px;
    appearance: none;
    background: #fff;
    border: 1px solid #666;
}

.help_bar {
    display: flex;
    gap: 5px;
    height: 28px;
    padding: 8px 4px 2px 7px;
    background: linear-gradient(#b4b4b4 0 6px, #8c8c8c 6px 8px, #ededed 8px);
    border-bottom: 1px solid #444;
    color: #111;
}

.help_bar p {
    flex: 1;
    margin: 0;
    padding-left: 6px;
    line-height: 14px;
    border: 1px solid #fff;
    border-top-color: #888;
    border-left-color: #777;
}

.help_bar p:last-child {
    flex: none;
    width: 223px;
}

.watermark {
    position: absolute;
    left: 10px;
    bottom: 22px;
    display: flex;
    align-items: flex-end;
    gap: 6px;
    opacity: 0.6;
    font-family: "Open Sans", sans-serif;
    color: #555;
    pointer-events: none;
}

.watermark svg {
    opacity: 0.8;
}

.words {
    display: flex;
    flex-direction: column;
}

.words b {
    font-size: 33px;
    line-height: 30px;
}

.words span {
    padding-left: 6px;
    font-size: 21px;
    font-weight: 600;
    line-height: 20px;
}
```
